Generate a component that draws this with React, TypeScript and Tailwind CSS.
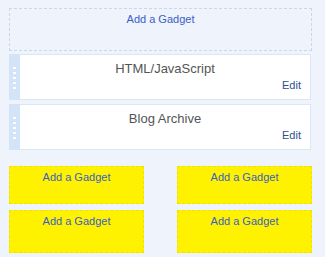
import React from "react";

const font = { fontFamily: '"Liberation Sans", Arial, sans-serif' };

function Handle() {
  return (
    <div className="w-[11px] shrink-0 bg-[#d3e4f9] flex flex-col items-center pt-[13px] gap-[3px]">
      {[0, 1, 2, 3, 4].map((i) => (
        <span key={i} className="block w-[3px] h-[2px] bg-white" />
      ))}
    </div>
  );
}

function Widget({ title }: { title: string }) {
  return (
    <div className="flex h-[46px] w-[302px]">
      <Handle />
      <div className="flex-1 flex flex-col bg-white border border-[#dce6f4] border-l-0">
        <div className="text-[13px] leading-[15px] text-[#555] text-center pt-[6px]">{title}</div>
        <div className="text-[11px] leading-[13px] text-[#2f4f8f] text-right pr-[9px] pt-[3px]">Edit</div>
      </div>
    </div>
  );
}

function YellowGadget({ tall }: { tall?: boolean }) {
  return (
    <div
      className={`${tall ? "h-[43px]" : "h-[38px]"} bg-[#fff200] border border-dashed border-[#efe300] text-center text-[11px] leading-[13px] text-[#3a60c4] pt-[4px]`}
    >
      Add a Gadget
    </div>
  );
}

export default function App() {
  return (
    <div className="w-[325px] h-[280px] bg-white" style={font}>
      <div className="bg-[#eef3fc] pt-2 pl-[9px] pb-1">
        <div className="w-[303px] h-[43px] border border-dashed border-[#c9d6ec] text-center text-[11px] leading-[13px] text-[#3a60c4] pt-[4px]">
          Add a Gadget
        </div>
        <div className="mt-[3px] flex flex-col gap-1">
          <Widget title="HTML/JavaScript" />
          <Widget title="Blog Archive" />
        </div>
        <div className="mt-4 grid grid-cols-[135px_135px] gap-x-[33px] gap-y-[6px]">
          <YellowGadget />
          <YellowGadget />
          <YellowGadget tall />
          <YellowGadget tall />
        </div>
      </div>
    </div>
  );
}
